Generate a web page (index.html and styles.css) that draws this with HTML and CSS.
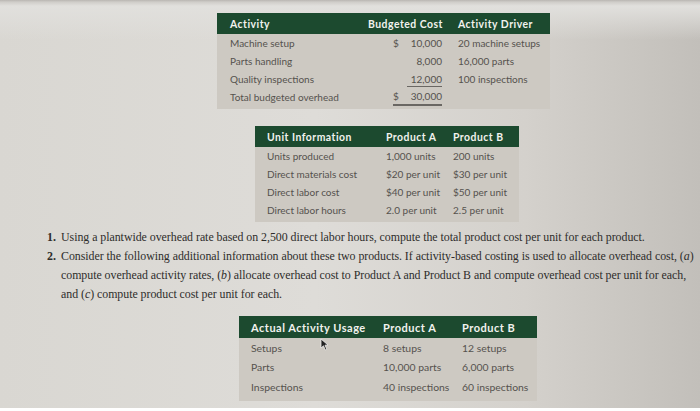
FILE: index.html
```html
<!DOCTYPE html>
<html>
<head>
<meta charset="utf-8">
<link rel="stylesheet" href="styles.css">
</head>
<body>
<div class="page">
  <div class="tbl t1">
    <div class="hd"><span>Activity</span><span class="r">Budgeted Cost</span><span>Activity Driver</span></div>
    <div class="row"><span>Machine setup</span><span class="r"><span class="dol">$</span>10,000</span><span>20 machine setups</span></div>
    <div class="row"><span>Parts handling</span><span class="r">8,000</span><span>16,000 parts</span></div>
    <div class="row"><span>Quality inspections</span><span class="r"><span class="ul">12,000</span></span><span>100 inspections</span></div>
    <div class="row"><span>Total budgeted overhead</span><span class="r"><span class="ul2"><span class="dol">$</span>30,000</span></span><span></span></div>
  </div>

  <div class="tbl t2">
    <div class="hd"><span>Unit Information</span><span>Product A</span><span>Product B</span></div>
    <div class="row"><span>Units produced</span><span>1,000 units</span><span>200 units</span></div>
    <div class="row"><span>Direct materials cost</span><span>$20 per unit</span><span>$30 per unit</span></div>
    <div class="row"><span>Direct labor cost</span><span>$40 per unit</span><span>$50 per unit</span></div>
    <div class="row"><span>Direct labor hours</span><span>2.0 per unit</span><span>2.5 per unit</span></div>
  </div>

  <ol class="qs">
    <li><span class="num">1.</span><span>Using a plantwide overhead rate based on 2,500 direct labor hours, compute the total product cost per unit for each product.</span></li>
    <li><span class="num">2.</span><span>Consider the following additional information about these two products. If activity-based costing is used to allocate overhead cost, (<i>a</i>) compute overhead activity rates, (<i>b</i>) allocate overhead cost to Product A and Product B and compute overhead cost per unit for each, and (<i>c</i>) compute product cost per unit for each.</span></li>
  </ol>

  <div class="tbl t3">
    <div class="hd"><span>Actual Activity Usage</span><span>Product A</span><span>Product B</span></div>
    <div class="row"><span>Setups</span><span>8 setups</span><span>12 setups</span></div>
    <div class="row"><span>Parts</span><span>10,000 parts</span><span>6,000 parts</span></div>
    <div class="row"><span>Inspections</span><span>40 inspections</span><span>60 inspections</span></div>
    <svg class="cursor" width="9" height="13" viewBox="0 0 9 13"><path d="M1 1 L1 10 L3.5 7.8 L5.3 12 L6.8 11.3 L5 7.2 L8 7 Z" fill="#222" stroke="#eee" stroke-width="0.8"/></svg>
  </div>
</div>
</body>
</html>
```
FILE: styles.css
```css
html, body {
  margin: 0;
  padding: 0;
}
body {
  width: 700px;
  height: 411px;
  overflow: hidden;
  background: #fff;
}
.page {
  width: 700px;
  height: 408px;
  background:
    linear-gradient(to bottom, #b9b6b2 0, #cfcdc9 2px, #e1e0dd 6px, rgba(225,224,221,0) 40px),
    linear-gradient(to right, #d9d7d2 0%, #dedcd8 45%, #d4d1cc 75%, #c2bfba 100%);
  padding-top: 13px;
  box-sizing: border-box;
  font-family: "Lato", "Open Sans", sans-serif;
  color: #55524e;
  display: flex;
  flex-direction: column;
}
.tbl {
  background: #cdc9c2;
  font-size: 10px;
  position: relative;
}
.tbl .hd, .tbl .row {
  display: grid;
  align-items: center;
  white-space: nowrap;
}
.tbl .hd {
  background: #1c4a2f;
  color: #f2f2ee;
  font-weight: 700;
  font-size: 10.4px;
  letter-spacing: 0.5px;
  height: 21px;
}
.tbl .row {
  height: 18px;
}
.r {
  text-align: right;
}
.dol {
  margin-right: 12px;
}
.ul {
  display: inline-block;
  border-bottom: 1px solid #6a6763;
  line-height: 14px;
  padding-left: 4px;
}
.ul2 {
  display: inline-block;
  border-bottom: 2px solid #6a6763;
  line-height: 15px;
}
.t1 {
  margin-left: 217px;
  width: 333px;
  padding-bottom: 3px;
}
.t1 .hd, .t1 .row {
  grid-template-columns: 138px 74px 1fr;
  padding-left: 13px;
}
.t1 .hd > span:nth-child(3), .t1 .row > span:nth-child(3) {
  padding-left: 16px;
}
.t2 {
  margin-left: 255px;
  margin-top: 17px;
  width: 264px;
  padding-bottom: 3px;
}
.t2 .hd, .t2 .row {
  grid-template-columns: 119px 67px 1fr;
  padding-left: 12px;
}
.qs {
  list-style: none;
  margin: 6px 0 0 0;
  padding: 0 2px 0 47px;
  font-family: "Liberation Serif", "Times New Roman", serif;
  font-size: 11.9px;
  line-height: 19px;
  color: #2e2d2b;
  letter-spacing: -0.04px;
}
.qs li {
  display: flex;
}
.qs .num {
  width: 14px;
  flex: none;
  font-weight: 700;
}
.t3 {
  margin-left: 239px;
  margin-top: 12px;
  width: 298px;
  padding-bottom: 4px;
  font-size: 10.4px;
}
.t3 .hd, .t3 .row {
  grid-template-columns: 132px 79px 1fr;
  padding-left: 12px;
}
.t3 .hd {
  height: 22px;
  font-size: 11px;
}
.t3 .row {
  height: 19.5px;
}
.cursor {
  position: absolute;
  left: 81px;
  top: 22px;
}
```
